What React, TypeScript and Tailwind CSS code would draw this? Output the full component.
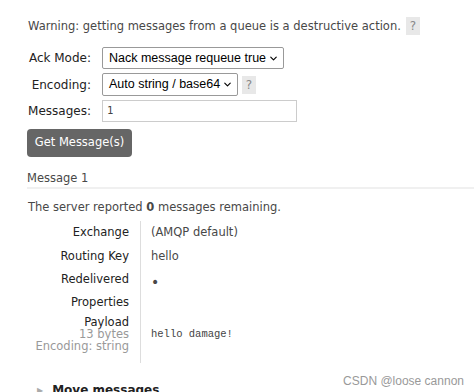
import { ChevronDown } from "lucide-react"

const body = "font-['DejaVu_Sans',Verdana,sans-serif] text-[11.5px] text-[#484848]"
const ctrl = "font-['Liberation_Sans',Arial,sans-serif] text-[12.5px] text-black whitespace-nowrap"

const Help = () => (
    <span className="inline-flex items-center justify-center w-[14px] h-[18px] bg-[#e8e8e8] text-[#888] text-[12px]">?</span>
)

const Row = ({ label, children }: { label: string; children: React.ReactNode }) => (
    <div className="flex items-center">
        <span className="w-[91px] text-right pr-[11px] text-[12px] text-[#222]">{label}</span>
        {children}
    </div>
)

const Field = ({ label, children, h = "h-[24px]" }: { label: string; children: React.ReactNode; h?: string }) => (
    <div className={`flex ${h}`}>
        <div className="w-[141px] text-right pr-[11px] border-r border-[#ddd] text-[11.5px] text-[#222] flex items-center justify-end">{label}</div>
        <div className="pl-[10px] flex items-center">{children}</div>
    </div>
)

export default function App() {
    return <div className={`${body} w-[474px] h-[392px] overflow-hidden bg-white relative`}>
        <div className="pl-[28px] pt-[17px] flex items-center gap-[5px] leading-[18px]">
            Warning: getting messages from a queue is a destructive action. <Help />
        </div>

        <div className="mt-[12px] flex flex-col gap-[4px] pl-[11px]">
            <Row label="Ack Mode:">
                <div className={`${ctrl} h-[22px] w-[182px] border border-[#999] rounded-[2px] flex items-center justify-between pl-[6px] pr-[4px]`}>
                    Nack message requeue true <ChevronDown size={11} strokeWidth={2.5} />
                </div>
            </Row>
            <Row label="Encoding:">
                <div className={`${ctrl} h-[23px] w-[136px] border border-[#999] rounded-[2px] flex items-center justify-between pl-[6px] pr-[4px]`}>
                    Auto string / base64 <ChevronDown size={11} strokeWidth={2.5} />
                </div>
                <span className="ml-[4px] flex"><Help /></span>
            </Row>
            <Row label="Messages:">
                <div className="h-[22px] w-[195px] border border-[#ccc] flex items-center px-[4px] font-['DejaVu_Sans_Mono',monospace] text-[10.5px] text-[#444]">1</div>
            </Row>
        </div>

        <button className="ml-[27px] mt-[7px] h-[28px] w-[105px] rounded-[4px] bg-[#666] text-white text-[11.5px]">Get Message(s)</button>

        <div className="ml-[27px] mt-[14px] pb-[1px] leading-[15px] border-b-2 border-[#f0f0f0]">Message 1</div>

        <div className="ml-[28px] mt-[11px] leading-[15px]">The server reported <b>0</b> messages remaining.</div>

        <div className="mt-[6px] flex flex-col">
            <Field label="Exchange">(AMQP default)</Field>
            <Field label="Routing Key">hello</Field>
            <Field label="Redelivered" h="h-[22px]"><span className="text-[14px] pt-[4px]">&bull;</span></Field>
            <Field label="Properties"> </Field>
            <div className="flex">
                <div className="w-[141px] text-right pr-[11px] border-r border-[#ddd] pt-[1px] pb-[11px] leading-[12px]">
                    <div className="text-[#222]">Payload</div>
                    <div className="text-[#999]">13 bytes</div>
                    <div className="text-[#999]">Encoding: string</div>
                </div>
                <div className="pl-[10px] pt-[13px] leading-[12px] font-['Liberation_Mono','Courier_New',monospace] text-[10.5px] text-[#444]">hello damage!</div>
            </div>
        </div>

        <div className="ml-[37px] mt-[20px] flex items-center gap-[9px] font-bold leading-[15px] text-[12px] text-[#222]">
            <span className="text-[#aaa] text-[8px]">&#9654;</span> Move messages
        </div>

        <div className="absolute right-[10px] top-[372px] font-['Liberation_Sans',Arial,sans-serif] text-[12px] text-[#999]">CSDN @loose cannon</div>
    </div>
}
